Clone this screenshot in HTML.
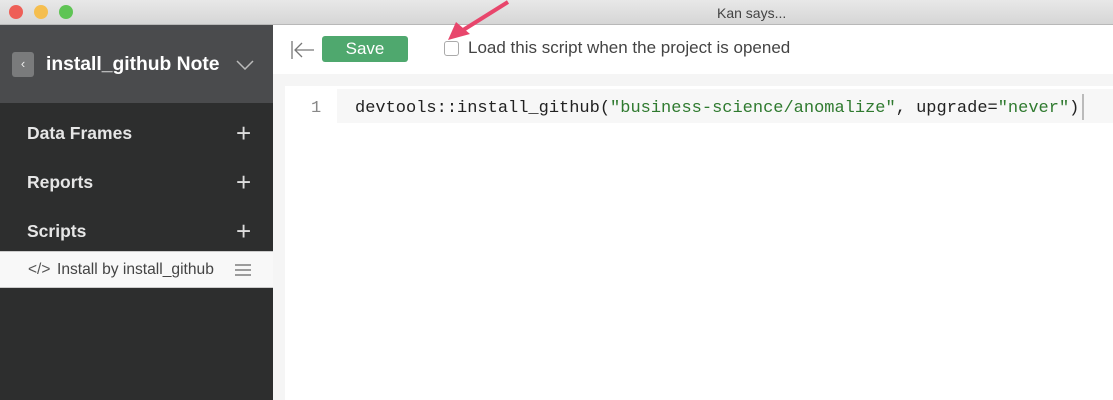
<!DOCTYPE html>
<html><head><style>
*{margin:0;padding:0;box-sizing:border-box}
body{width:1113px;height:400px;overflow:hidden;background:#fff;font-family:"Liberation Sans",sans-serif;position:relative}
.tb{position:absolute;left:0;top:0;width:1113px;height:25px;background:linear-gradient(#e8e8e8,#d6d6d6);border-bottom:1px solid #b8b8b8}
.dot{position:absolute;top:5px;width:14px;height:14px;border-radius:50%}
.title{position:absolute;left:717px;top:5px;font-size:14px;color:#444}
.side{position:absolute;left:0;top:25px;width:273px;height:375px;background:#2d2e2e}
.hdr{position:absolute;left:0;top:0;width:273px;height:78px;background:#4a4b4d}
.back{position:absolute;left:12px;top:27px;width:22px;height:25px;background:#7a7b7c;border-radius:3px;color:#eee;font-size:13px;text-align:center;line-height:24px}
.nm{position:absolute;left:46px;top:29px;color:#fff;font-size:19.3px;font-weight:bold}
.item{position:absolute;left:27px;color:#e6e6e6;font-size:17.5px;font-weight:bold}
.plus{position:absolute;left:236px;color:#ddd;font-size:26px;font-weight:300;line-height:20px}
.sel{position:absolute;left:0;top:226px;width:273px;height:37px;background:#f8f8f8;border-top:1px solid #ccc;border-bottom:1px solid #ccc}
.main{position:absolute;left:273px;top:25px;right:0;bottom:0}
.save{position:absolute;left:49px;top:11px;width:86px;height:26px;background:#4fa86e;border-radius:3px;color:#fff;font-size:17px;text-align:center;line-height:26px}
.ed{position:absolute;left:0;top:49px;right:0;bottom:0;background:#f5f5f5}
.ed2{position:absolute;left:12px;top:12px;right:0;bottom:0;background:#fff}
.code{position:absolute;font-family:"Liberation Mono",monospace;font-size:17px;color:#222;white-space:pre}
.s{color:#2f7a2f}
</style></head><body>
<div class="tb">
<div class="dot" style="left:9px;background:#ee5f57"></div>
<div class="dot" style="left:34px;background:#f5be4f"></div>
<div class="dot" style="left:59px;background:#5fc454"></div>
<div class="title">Kan says...</div>
</div>
<div class="side">
<div class="hdr"><div class="back">‹</div><div class="nm">install_github Note</div>
<svg style="position:absolute;left:236px;top:35px" width="18" height="10"><path d="M1 1L9 9L17 1" stroke="#bbb" stroke-width="1.5" fill="none"/></svg></div>
<div class="item" style="top:98px">Data Frames</div><div class="plus" style="top:98px">+</div>
<div class="item" style="top:147px">Reports</div><div class="plus" style="top:147px">+</div>
<div class="item" style="top:196px">Scripts</div><div class="plus" style="top:196px">+</div>
<div class="sel">
<div style="position:absolute;left:28px;top:9px;font-size:15.5px;color:#555">&lt;/&gt;</div>
<div style="position:absolute;left:57px;top:9px;font-size:15.6px;color:#444">Install by install_github</div>
<svg style="position:absolute;left:235px;top:12px" width="16" height="12"><path d="M0 1H16M0 6H16M0 11H16" stroke="#666" stroke-width="1.3"/></svg>
</div>
</div>
<div class="main">
<svg style="position:absolute;left:18px;top:15px" width="24" height="20"><path d="M1 1V19M4 10H23M11 3L4 10L11 17" stroke="#777" stroke-width="1.3" fill="none"/></svg>
<div class="save">Save</div>
<div style="position:absolute;left:171px;top:16px;width:15px;height:15px;border:1px solid #aaa;border-radius:3px;background:#fff"></div>
<div style="position:absolute;left:195px;top:13px;font-size:17px;color:#444">Load this script when the project is opened</div>
<div class="ed"><div class="ed2">
<div style="position:absolute;left:52px;top:3px;right:0;height:34px;background:#f7f7f7"></div>
<div style="position:absolute;left:26px;top:13px;font-family:'Liberation Mono',monospace;font-size:17px;color:#888">1</div>
<div class="code" style="left:70px;top:13px">devtools::install_github(<span class="s">"business-science/anomalize"</span>, upgrade=<span class="s">"never"</span>)</div>
<div style="position:absolute;left:797px;top:8px;width:2px;height:26px;background:#bbb"></div>
</div></div>
<svg style="position:absolute;left:165px;top:-25px" width="75" height="50"><path d="M70 2L22 32" stroke="#e8466c" stroke-width="4"/><path d="M10 40L18 22L32 34Z" fill="#e8466c"/></svg>
</div>
</body></html>
